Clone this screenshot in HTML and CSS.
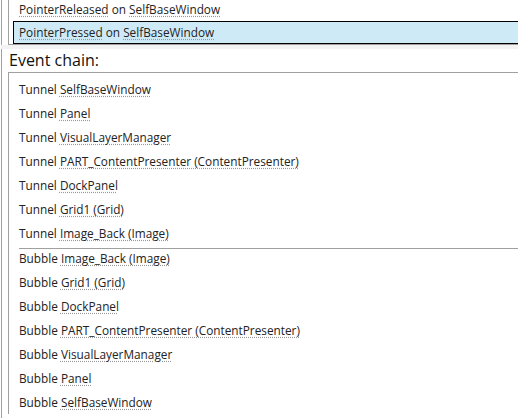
FILE: index.html
```html
<!DOCTYPE html>
<html>
<head>
<meta charset="utf-8">
<link rel="stylesheet" href="styles.css">
</head>
<body>
<div class="frame">
  <div class="top-list">
    <div class="top-inner">
      <div class="item"><span class="ref">PointerReleased</span> on <span class="ref">SelfBaseWindow</span></div>
      <div class="item selected"><span class="ref">PointerPressed</span> on <span class="ref">SelfBaseWindow</span></div>
    </div>
  </div>
  <div class="strip"></div>
  <div class="label">Event chain:</div>
  <div class="chain">
    <div class="row">Tunnel <span class="ref">SelfBaseWindow</span></div>
    <div class="row">Tunnel <span class="ref">Panel</span></div>
    <div class="row">Tunnel <span class="ref">VisualLayerManager</span></div>
    <div class="row">Tunnel <span class="ref">PART_ContentPresenter (ContentPresenter)</span></div>
    <div class="row">Tunnel <span class="ref">DockPanel</span></div>
    <div class="row">Tunnel <span class="ref">Grid1 (Grid)</span></div>
    <div class="row">Tunnel <span class="ref">Image_Back (Image)</span></div>
    <div class="sep"></div>
    <div class="row">Bubble <span class="ref">Image_Back (Image)</span></div>
    <div class="row">Bubble <span class="ref">Grid1 (Grid)</span></div>
    <div class="row">Bubble <span class="ref">DockPanel</span></div>
    <div class="row">Bubble <span class="ref">PART_ContentPresenter (ContentPresenter)</span></div>
    <div class="row">Bubble <span class="ref">VisualLayerManager</span></div>
    <div class="row">Bubble <span class="ref">Panel</span></div>
    <div class="row">Bubble <span class="ref">SelfBaseWindow</span></div>
  </div>
</div>
</body>
</html>
```
FILE: styles.css
```css
html, body {
  margin: 0;
  padding: 0;
  background: #ffffff;
  height: 100%;
  overflow: hidden;
}
body {
  font-family: "Open Sans", "Noto Sans", sans-serif;
  font-size: 11.8px;
  color: #222222;
  padding-left: 1px;
}
.frame {
  border-left: 1px solid #a0a0a0;
  padding-left: 6px;
  height: 418px;
}
.top-list {
  border-left: 1px solid #a0a0a0;
  border-bottom: 1px solid #a0a0a0;
  height: 44px;
  overflow: hidden;
}
.top-inner {
  margin-top: -2px;
}
.item {
  height: 21px;
  line-height: 21px;
  margin-left: 4px;
  padding-left: 5px;
  border: 1px solid transparent;
  border-right: none;
  white-space: nowrap;
}
.item.selected {
  background: #cfeaf7;
  border-color: #000000;
}
.strip {
  height: 4px;
  background: #f3f3f3;
  margin-left: -7px;
}
.label {
  height: 23px;
  line-height: 23px;
  font-size: 16px;
  color: #111111;
  padding-left: 1px;
}
.chain {
  border-left: 1px solid #a0a0a0;
  border-top: 1px solid #a0a0a0;
  padding-top: 4px;
}
.row {
  height: 24px;
  line-height: 24px;
  padding-left: 10px;
  white-space: nowrap;
}
.sep {
  height: 1px;
  background: #a0a0a0;
  margin: 3px 0 -3px 10px;
}
.ref {
  text-decoration: underline dotted #999999;
  text-underline-offset: 2px;
}
```
